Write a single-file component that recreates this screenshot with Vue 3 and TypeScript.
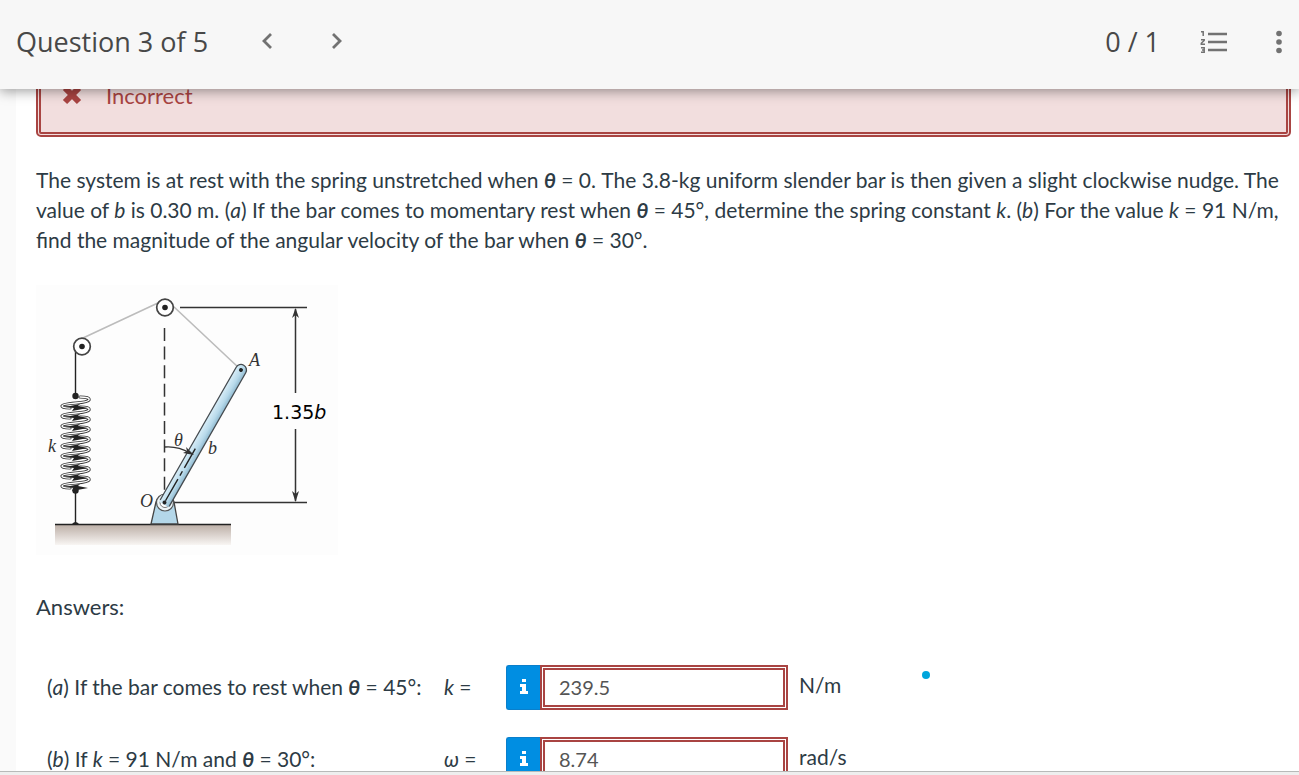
<script setup lang="ts">
import { ref } from 'vue'

const springConstant = ref('239.5')
const angularVelocity = ref('8.74')

const coils = Array.from({ length: 9 }, (_, i) => {
  const y = 400 + i * 10
  return {
    front: `M80 ${y - 3} Q90 ${y - 3} 89 ${y} Q88 ${y + 2} 76 ${y + 3} Q62 ${y + 4} 62 ${y + 6} Q62 ${y + 8} 70 ${y + 8}`,
    shade: `M65 ${y + 7} L80 ${y + 4} L78 ${y + 6} L88 ${y + 8} L72 ${y + 11} L74 ${y + 8} Z`,
  }
})
</script>

<template>
  <div class="page">
    <header class="topbar">
      <h1 class="title">Question 3 of 5</h1>
      <nav class="pager" aria-label="Question navigation">
        <button type="button" class="icon-button" aria-label="Previous question">
          <svg width="14" height="20" viewBox="0 0 14 20"><path d="M11 2 L4 9 L11 16" fill="none" stroke="#727272" stroke-width="2.8" /></svg>
        </button>
        <button type="button" class="icon-button" aria-label="Next question">
          <svg width="14" height="20" viewBox="0 0 14 20"><path d="M3 2 L10 9 L3 16" fill="none" stroke="#727272" stroke-width="2.8" /></svg>
        </button>
      </nav>
      <span class="score">0 / 1</span>
      <button type="button" class="icon-button list-button" aria-label="Question list">
        <svg width="28" height="24" viewBox="0 0 28 24" fill="none" stroke="#727272">
          <path d="M8 4 H27 M8 12 H27 M8 20 H27" stroke-width="2.6" />
          <path d="M1 1.7 H3.2 V6 M1 9.7 H4.2 V10.5 L1.3 13.3 V14.2 H5 M1 17.7 H4.2 V22.2 H1 M2 20 H4.2" stroke-width="1.5" />
        </svg>
      </button>
      <button type="button" class="icon-button menu-button" aria-label="More options">
        <svg width="6" height="24" viewBox="0 0 6 24" fill="#727272"><circle cx="3" cy="3.5" r="2.8" /><circle cx="3" cy="12" r="2.8" /><circle cx="3" cy="20.5" r="2.8" /></svg>
      </button>
    </header>

    <main class="content">
      <div class="alert" role="alert">
        <svg width="20" height="20" viewBox="0 0 20 20"><path d="M3 2 L17 16 M17 2 L3 16" stroke="#a94442" stroke-width="6" /></svg>
        <span>Incorrect</span>
      </div>

      <p class="problem">
        The system is at rest with the spring unstretched when <i class="greek">θ</i> = 0. The 3.8-kg uniform slender bar is then given a slight clockwise nudge. The value of <i>b</i> is 0.30 m. (<i>a</i>) If the bar comes to momentary rest when <i class="greek">θ</i> = 45°, determine the spring constant <i>k</i>. (<i>b</i>) For the value <i>k</i> = 91 N/m, find the magnitude of the angular velocity of the bar when <i class="greek">θ</i> = 30°.
      </p>

      <svg class="figure" width="302" height="270" viewBox="36 285 302 270" role="img" aria-label="Bar pivoted at O, joined to a spring by a cord over two pulleys">
        <defs>
          <linearGradient id="ground" x1="0" y1="0" x2="0" y2="1">
            <stop offset="0" stop-color="#bdb0a8" />
            <stop offset="1" stop-color="#f8f5f3" />
          </linearGradient>
          <linearGradient id="bar" x1="0" y1="0" x2="1" y2="0">
            <stop offset="0" stop-color="#d9eef8" />
            <stop offset="0.6" stop-color="#b7d9ea" />
            <stop offset="1" stop-color="#8fb9cf" />
          </linearGradient>
        </defs>
        <rect x="36" y="285" width="302" height="270" fill="#fdfdfd" />
        <rect x="55" y="525" width="176" height="20" fill="url(#ground)" />
        <path d="M55 524.5 H231" stroke="#222" stroke-width="1.6" />

        <path d="M83 338 L160 302 M173 306 L239 368" fill="none" stroke="#bcbcbc" stroke-width="1.6" />
        <path d="M75.5 350 V396 M75.5 490 V524" stroke="#222" stroke-width="1.4" />
        <g v-for="coil in coils" :key="coil.front">
          <path :d="coil.front" fill="none" stroke="#333" stroke-width="3.2" stroke-linecap="round" />
          <path :d="coil.front" fill="none" stroke="#fff" stroke-width="1.5" stroke-linecap="round" />
        </g>
        <path v-for="coil in coils" :key="coil.shade" :d="coil.shade" fill="#222" />
        <g fill="#222">
          <circle cx="75.5" cy="396" r="3.2" />
          <circle cx="75.5" cy="490.5" r="3.2" />
          <path d="M72 524 Q75.5 520 79 524 Z" />
        </g>

        <path d="M164.5 328 V492" stroke="#333" stroke-width="1.5" stroke-dasharray="13 5.6" />
        <g fill="#fff" stroke="#444" stroke-width="1.7">
          <circle cx="82" cy="346.5" r="8.3" />
          <circle cx="165" cy="307.5" r="8.3" />
        </g>
        <circle cx="82" cy="346.5" r="2.8" fill="#222" />
        <circle cx="165" cy="307.5" r="2.8" fill="#222" />

        <g fill="none" stroke="#333" stroke-width="1.5">
          <path d="M180 307.5 H307 M174 502.5 H307 M295.5 309 V393 M295.5 429 V501" />
        </g>
        <path d="M295.5 308 L299 318 L295.5 315 L292 318 Z M295.5 502 L299 491 L295.5 494 L292 491 Z" fill="#333" />

        <path d="M151 524 L156 502 C158 493 172 493 174 502 L178 524 Z" fill="#b4d7e9" stroke="#444" stroke-width="1.3" />
        <circle cx="165" cy="502.5" r="8.5" fill="#edf5f8" stroke="#555" stroke-width="1.2" />
        <circle cx="165" cy="502.5" r="5" fill="#fff" stroke="#777" />
        <g transform="translate(164.5 502.5) rotate(29.8)">
          <path d="M-5 2 V-153 A5.5 5.5 0 0 1 6 -153 V2 Z" fill="url(#bar)" />
          <path d="M-5 0 V-153 A5.5 5.5 0 0 1 6 -153 V1" fill="none" stroke="#454b50" stroke-width="1.3" />
          <path d="M0 -2 V-27 M0 -31 V-36 M0 -40 V-62" stroke="#222" stroke-width="1.4" />
          <circle cx="0.5" cy="-153" r="2" fill="#222" />
          <circle cx="0" cy="0" r="2" fill="#222" />
        </g>
        <path d="M165 447 Q178 446 190 453" fill="none" stroke="#333" stroke-width="1.3" />
        <path d="M194 455 L183 453 L187 451 L186 447 Z" fill="#333" />
        <g class="figure-labels">
          <text x="48" y="452">k</text>
          <text x="174" y="446">θ</text>
          <text x="208" y="454">b</text>
          <text x="140" y="507">O</text>
          <text x="249" y="366">A</text>
        </g>
        <text class="figure-length" x="272" y="419">1.35<tspan font-style="italic">b</tspan></text>
      </svg>

      <h2 class="answers-title">Answers:</h2>

      <form class="answers" @submit.prevent>
        <div class="answer">
          <label for="answer-a">(<i>a</i>) If the bar comes to rest when <i class="greek">θ</i> = 45°:</label>
          <span class="symbol"><i>k</i> =</span>
          <div class="field">
            <button type="button" class="info" aria-label="Information about part a">
              <svg width="10" height="17" viewBox="0 0 10 17" fill="#fff"><path d="M3 0 H7 V3 H3 Z M1 5 H7 V12 H9 V15 H1 V12 H3 V8 H1 Z" /></svg>
            </button>
            <input id="answer-a" v-model="springConstant" type="text" />
          </div>
          <span class="unit">N/m</span>
          <span class="marker"></span>
        </div>
        <div class="answer">
          <label for="answer-b">(<i>b</i>) If <i>k</i> = 91 N/m and <i class="greek">θ</i> = 30°:</label>
          <span class="symbol"><i>ω</i> =</span>
          <div class="field">
            <button type="button" class="info" aria-label="Information about part b">
              <svg width="10" height="17" viewBox="0 0 10 17" fill="#fff"><path d="M3 0 H7 V3 H3 Z M1 5 H7 V12 H9 V15 H1 V12 H3 V8 H1 Z" /></svg>
            </button>
            <input id="answer-b" v-model="angularVelocity" type="text" />
          </div>
          <span class="unit">rad/s</span>
        </div>
      </form>
    </main>
    <footer class="bottom"></footer>
  </div>
</template>

<style>
body {
  margin: 0;
}
</style>

<style scoped>
* {
  box-sizing: border-box;
}
.page {
  display: flex;
  flex-direction: column;
  height: 100vh;
  overflow: hidden;
  background: #fff;
  color: #2d3b45;
  font-family: Lato, "Liberation Sans", sans-serif;
  font-size: 21px;
  line-height: 30px;
}
.topbar {
  position: relative;
  z-index: 1;
  display: flex;
  flex: none;
  align-items: center;
  padding: 24px 16px 29px;
  background: #f7f7f7;
  box-shadow: 0 2px 12px rgba(0, 0, 0, 0.4);
  color: #484848;
  font-family: "Open Sans", sans-serif;
  font-size: 27px;
  line-height: 36px;
}
.title {
  margin: 0;
  font-size: 27px;
  font-weight: 400;
}
.pager {
  display: flex;
  gap: 56px;
  margin-left: 52px;
}
.icon-button {
  display: flex;
  padding: 0;
  border: 0;
  background: none;
}
.score {
  margin-left: auto;
}
.list-button {
  margin-left: 40px;
}
.menu-button {
  margin: 0 1px 0 48px;
}
.content {
  flex: 1;
  min-height: 0;
  overflow: hidden;
  padding: 0 8px 0 36px;
  background: linear-gradient(to right, #fafafa 16px, #fff 16px);
}
.alert {
  display: flex;
  align-items: center;
  gap: 24px;
  height: 82px;
  margin-top: -34px;
  padding: 0 21px;
  border: 5px double #a94442;
  border-radius: 5px;
  background: #f2dede;
  color: #a94442;
  font-size: 22px;
}
.problem {
  margin: 28px 0 30px;
}
.greek {
  font-weight: 700;
}
.figure {
  display: block;
}
.figure-labels {
  fill: #333;
  font-family: "Liberation Serif", serif;
  font-size: 18px;
  font-style: italic;
}
.figure-length {
  fill: #000;
  font-family: "DejaVu Sans", sans-serif;
  font-size: 19px;
}
.answers-title {
  margin: 37px 0 43px;
  font-size: 22px;
  font-weight: 400;
}
.answers {
  display: grid;
  gap: 27px;
  padding-left: 11px;
}
.answer {
  position: relative;
  display: grid;
  grid-template-columns: 397px 62px 282px 1fr;
  align-items: center;
}
label,
.symbol {
  padding-bottom: 2px;
}
.field {
  display: flex;
  height: 45px;
}
.info {
  display: flex;
  flex: none;
  align-items: center;
  justify-content: center;
  width: 34px;
  padding: 0;
  border: 1px solid #0a7fcb;
  border-right: 0;
  border-radius: 3px 0 0 3px;
  background: #008ee2;
}
input {
  flex: 1;
  min-width: 0;
  padding: 0 14px 2px;
  border: 5px double #a94442;
  border-radius: 0;
  background: #fff;
  color: #555;
  font-family: inherit;
  font-size: 20px;
}
.unit {
  padding: 0 0 6px 11px;
}
.marker {
  position: absolute;
  top: 6px;
  left: 875px;
  width: 8px;
  height: 8px;
  border-radius: 50%;
  background: #00a5dc;
}
.bottom {
  flex: none;
  height: 4px;
  border-top: 1px solid #b8bab9;
  background: #eee;
}
</style>
